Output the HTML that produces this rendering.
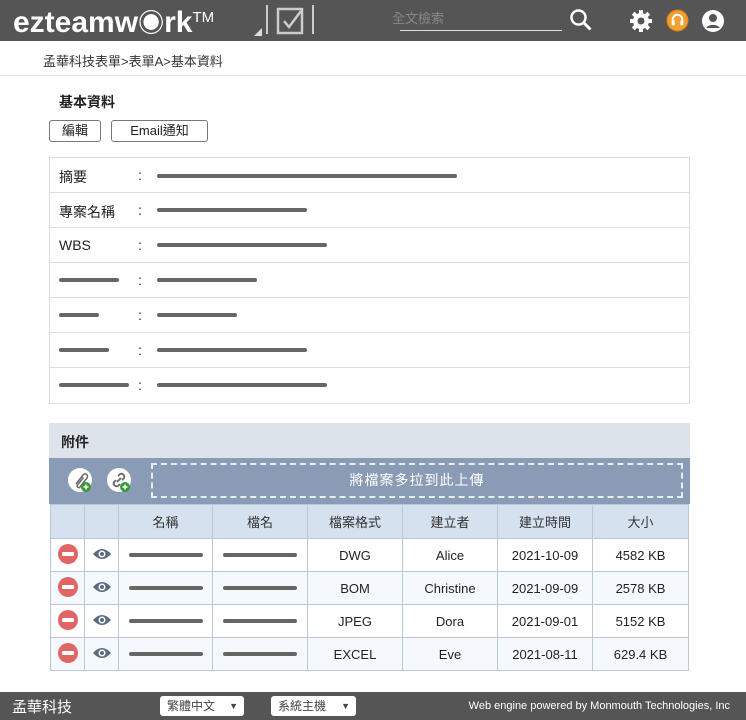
<!DOCTYPE html>
<html><head><meta charset="utf-8"><style>
*{box-sizing:border-box;margin:0;padding:0}
body{width:746px;height:720px;position:relative;background:#fff;font-family:"Liberation Sans","Noto Sans CJK TC",sans-serif;color:#222;overflow:hidden}
.hdr{position:absolute;left:0;top:0;width:746px;height:41px;background:#555}
.logo{position:absolute;left:13px;top:3px;color:#fff;font-size:30px;font-weight:bold;letter-spacing:0px}
.tm{font-size:15px;vertical-align:top;position:relative;top:6px;font-weight:normal}
.bc{position:absolute;left:43px;top:51px;font-size:13px;color:#333}
.line{position:absolute;left:0;top:75px;width:746px;height:1px;background:#ddd}
.bar{position:absolute;height:4px;border-radius:2px;background:#666}
.btn{position:absolute;top:120px;height:22px;border:1px solid #777;border-radius:3px;font-size:13px;text-align:center;line-height:20px;background:#fff}
.form{position:absolute;left:49px;top:157px;width:641px;border:1px solid #ddd}
.form div{height:35px;border-bottom:1px solid #ddd;position:relative;font-size:14px}
.form div:last-child{border-bottom:none}
.lab{position:absolute;left:9px;top:9px}
.col{position:absolute;left:88px;top:9px}
table{position:absolute;left:50px;top:504px;border-collapse:collapse;font-size:13px}
td,th{border:1px solid #b9c8d8;text-align:center;font-weight:normal;height:34px;padding:0}
td{height:33px}
th{background:#d5e1ef;color:#333}
tr:nth-child(odd) td{background:#f5f9fd}
.ft{position:absolute;left:0;top:692px;width:746px;height:28px;background:#555;color:#fff}
.sel{position:absolute;top:4px;height:20px;background:#fff;border-radius:3px;color:#444;font-size:12px;line-height:20px;padding-left:7px}
</style></head><body>
<div class="hdr">
<div class="logo">ezteamw<span style="font-size:26px">&#9673;</span>rk<span class="tm">TM</span></div>
<div style="position:absolute;left:254px;top:28px;width:0;height:0;border-left:8px solid transparent;border-bottom:8px solid #ddd"></div>
<div style="position:absolute;left:266px;top:5px;width:2px;height:29px;background:#ccc"></div>
<svg style="position:absolute;left:276px;top:5px" width="30" height="30" viewBox="0 0 30 30"><rect x="2" y="4" width="24" height="24" fill="none" stroke="#ccc" stroke-width="2.5"/><path d="M8 16l5 6 12-16" fill="none" stroke="#ccc" stroke-width="2.5"/></svg>
<div style="position:absolute;left:312px;top:5px;width:2px;height:29px;background:#ccc"></div>
<div style="position:absolute;left:392px;top:8px;color:#888;font-size:13px">全文檢索</div>
<div style="position:absolute;left:400px;top:30px;width:162px;height:1px;background:#ddd"></div>
<svg style="position:absolute;left:569px;top:8px" width="24" height="24" viewBox="0 0 24 24"><circle cx="9.5" cy="9.5" r="7" fill="none" stroke="#fff" stroke-width="2.5"/><path d="M14.5 14.5l7 7" stroke="#fff" stroke-width="3"/></svg>
<svg style="position:absolute;left:629px;top:9px" width="24" height="24" viewBox="0 0 24 24"><g fill="#fff"><circle cx="12" cy="12" r="8"/><rect x="10" y="1" width="4" height="22"/><rect x="1" y="10" width="22" height="4"/><rect x="10" y="1" width="4" height="22" transform="rotate(45 12 12)"/><rect x="10" y="1" width="4" height="22" transform="rotate(-45 12 12)"/></g><circle cx="12" cy="12" r="3.5" fill="#555"/></svg>
<svg style="position:absolute;left:666px;top:9px" width="23" height="23" viewBox="0 0 24 24"><circle cx="12" cy="12" r="11" fill="#f0a030" stroke="#e07a10"/><path d="M7 15v-4a5 5 0 0110 0v4" fill="none" stroke="#fff" stroke-width="2"/><rect x="6" y="12" width="3" height="5" fill="#fff"/><rect x="15" y="12" width="3" height="5" fill="#fff"/></svg>
<svg style="position:absolute;left:701px;top:9px" width="24" height="24" viewBox="0 0 24 24"><circle cx="12" cy="12" r="11" fill="#fff"/><circle cx="12" cy="9" r="4" fill="#555"/><path d="M5 19a8 6 0 0114 0" fill="#555"/></svg>
</div>
<div class="bc">孟華科技表單&gt;表單A&gt;基本資料</div>
<div class="line"></div>
<div style="position:absolute;left:59px;top:92px;font-size:14px;font-weight:bold">基本資料</div>
<div class="btn" style="left:49px;width:52px">編輯</div>
<div class="btn" style="left:111px;width:97px">Email通知</div>
<div class="form">
<div><span class="lab">摘要</span><span class="col">:</span><i class="bar" style="left:107px;top:16px;width:300px"></i></div>
<div><span class="lab">專案名稱</span><span class="col">:</span><i class="bar" style="left:107px;top:15px;width:150px"></i></div>
<div><span class="lab">WBS</span><span class="col">:</span><i class="bar" style="left:107px;top:15px;width:170px"></i></div>
<div><i class="bar" style="left:9px;top:15px;width:60px"></i><span class="col">:</span><i class="bar" style="left:107px;top:15px;width:100px"></i></div>
<div><i class="bar" style="left:9px;top:15px;width:40px"></i><span class="col">:</span><i class="bar" style="left:107px;top:15px;width:80px"></i></div>
<div><i class="bar" style="left:9px;top:15px;width:50px"></i><span class="col">:</span><i class="bar" style="left:107px;top:15px;width:150px"></i></div>
<div><i class="bar" style="left:9px;top:15px;width:70px"></i><span class="col">:</span><i class="bar" style="left:107px;top:15px;width:170px"></i></div>
</div>
<div style="position:absolute;left:49px;top:423px;width:641px;height:35px;background:#dde3ea;font-size:14px;font-weight:bold;padding:9px 12px">附件</div>
<div style="position:absolute;left:49px;top:458px;width:641px;height:46px;background:#8a9bb5">
<svg style="position:absolute;left:18px;top:9px" width="28" height="28" viewBox="0 0 28 28"><circle cx="13" cy="13" r="12" fill="#fff"/><path d="M9 17l7-9a2.5 2.5 0 014 3l-7 9a1.5 1.5 0 01-2.5-2l6-7.5" fill="none" stroke="#666" stroke-width="1.5"/><circle cx="19" cy="20" r="5" fill="#3a9a3a"/><path d="M19 17.5v5M16.5 20h5" stroke="#fff" stroke-width="1.5"/></svg>
<svg style="position:absolute;left:57px;top:9px" width="28" height="28" viewBox="0 0 28 28"><circle cx="13" cy="13" r="12" fill="#fff"/><path d="M12 9l2-2a3 3 0 014 4l-2 2M14 17l-2 2a3 3 0 01-4-4l2-2M11 15l4-4" fill="none" stroke="#666" stroke-width="1.8"/><circle cx="19" cy="20" r="5" fill="#3a9a3a"/><path d="M19 17.5v5M16.5 20h5" stroke="#fff" stroke-width="1.5"/></svg>
<div style="position:absolute;left:102px;top:5px;width:532px;height:35px;border:2px dashed #e8edf3;color:#fff;font-size:14px;text-align:center;line-height:31px;letter-spacing:1px">將檔案多拉到此上傳</div>
</div>
<table>
<tr><th style="width:34px"></th><th style="width:34px"></th><th style="width:94px">名稱</th><th style="width:95px">檔名</th><th style="width:95px">檔案格式</th><th style="width:95px">建立者</th><th style="width:95px">建立時間</th><th style="width:96px">大小</th></tr>
<tr><td>R</td><td>E</td><td>B</td><td>B</td><td>DWG</td><td>Alice</td><td>2021-10-09</td><td>4582 KB</td></tr>
<tr><td>R</td><td>E</td><td>B</td><td>B</td><td>BOM</td><td>Christine</td><td>2021-09-09</td><td>2578 KB</td></tr>
<tr><td>R</td><td>E</td><td>B</td><td>B</td><td>JPEG</td><td>Dora</td><td>2021-09-01</td><td>5152 KB</td></tr>
<tr><td>R</td><td>E</td><td>B</td><td>B</td><td>EXCEL</td><td>Eve</td><td>2021-08-11</td><td>629.4 KB</td></tr>
</table>
<div class="ft">
<span style="position:absolute;left:12px;top:4px;font-size:15px">孟華科技</span>
<div class="sel" style="left:160px;width:84px">繁體中文 <span style="position:absolute;right:6px;font-size:9px">▼</span></div>
<div class="sel" style="left:271px;width:85px">系統主機 <span style="position:absolute;right:6px;font-size:9px">▼</span></div>
<span style="position:absolute;right:16px;top:8px;font-size:11px">Web engine powered by Monmouth Technologies, Inc</span>
</div>
<script>
document.querySelectorAll('td').forEach(function(t){
 if(t.textContent=='R'){t.innerHTML='<svg width="22" height="22" viewBox="0 0 22 22"><circle cx="11" cy="11" r="10" fill="#e06666"/><rect x="5" y="9" width="12" height="4" rx="1" fill="#fff"/></svg>';}
 else if(t.textContent=='E'){t.innerHTML='<svg width="20" height="14" viewBox="0 0 20 14"><path d="M1 7Q10-3 19 7Q10 17 1 7z" fill="#5a6b80"/><circle cx="10" cy="7" r="3.5" fill="#fff"/><circle cx="10" cy="7" r="2" fill="#5a6b80"/></svg>';}
 else if(t.textContent=='B'){t.innerHTML='<i style="display:block;margin:0 auto;width:74px;height:4px;border-radius:2px;background:#666"></i>';}
});
</script>
</body></html>
